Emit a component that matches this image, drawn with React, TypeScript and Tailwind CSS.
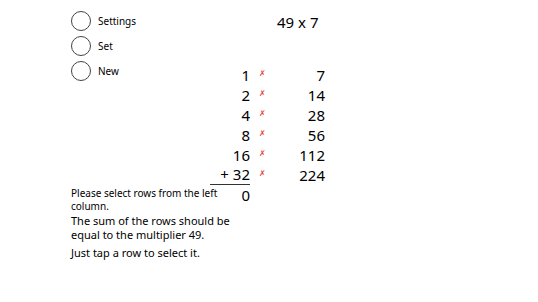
const rows = [
  { left: '1', right: '7' },
  { left: '2', right: '14' },
  { left: '4', right: '28' },
  { left: '8', right: '56' },
  { left: '16', right: '112' },
  { left: '+ 32', right: '224', last: true },
]

const Radio = ({ label }: { label: string }) => (
  <div className="flex items-center h-5">
    <div className="w-5 h-5 rounded-full border-[1.5px] border-[#444]" />
    <span className="ml-[7px] text-[10px] text-black">{label}</span>
  </div>
)

export default function App() {
  return (
    <div className="w-[538px] h-[302px] bg-white flex font-['Noto_Sans',sans-serif] text-black">
      <div className="w-[210px] pl-[71px] pt-[11px] flex flex-col">
        <div className="flex flex-col gap-[5px]">
          <Radio label="Settings" />
          <Radio label="Set" />
          <Radio label="New" />
        </div>
        <div className="mt-[106px] w-[165px]">
          <p className="text-[10px] leading-[13px]">Please select rows from the left column.</p>
          <p className="mt-[1px] text-[11px] leading-[14px]">The sum of the rows should be equal to the multiplier 49.</p>
          <p className="mt-[4px] text-[11px] leading-[14px]">Just tap a row to select it.</p>
        </div>
      </div>
      <div className="flex flex-col pt-[12px]">
        <div className="ml-[67px] text-[15px] leading-[20px]">49 x 7</div>
        <div className="mt-[33px] flex flex-col text-[15px] leading-[20px]">
          {rows.map((r) => (
            <div key={r.right} className="flex h-5">
              <div className="w-[40px] flex justify-end">
                <span className={r.last ? 'border-b border-[#333] pl-[10px] leading-[18px]' : ''}>{r.left}</span>
              </div>
              <div className="w-[30px] pl-[9px] text-[8px] leading-[16px] text-[#e53b2c]">✗</div>
              <div className="w-[45px] text-right">{r.right}</div>
            </div>
          ))}
          <div className="flex h-5">
            <div className="w-[40px] text-right">0</div>
          </div>
        </div>
      </div>
    </div>
  )
}
